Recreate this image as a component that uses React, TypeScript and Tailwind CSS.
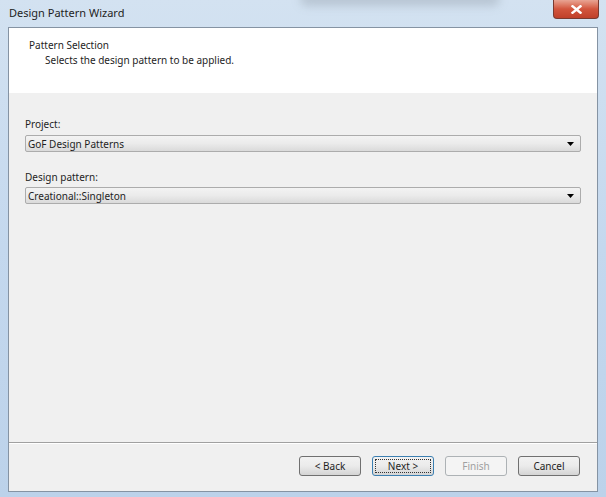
import React from 'react';

const font = { fontFamily: '"Noto Sans", "Open Sans", Arial, sans-serif' };

function Combo({ value }: { value: string }) {
  return (
    <div className="flex h-[17px] items-center justify-between rounded-[2px] border border-[#acacac] bg-gradient-to-b from-[#f3f3f3] via-[#ebebeb] to-[#dadada] pl-[2px] pr-[6px] text-[10px] leading-none text-[#1e1e1e]">
      <span>{value}</span>
      <svg width="7" height="4" viewBox="0 0 7 4">
        <path d="M0 0h7L3.5 4z" fill="#000" />
      </svg>
    </div>
  );
}

function WizButton({
  label,
  focused,
  disabled,
}: {
  label: string;
  focused?: boolean;
  disabled?: boolean;
}) {
  if (disabled) {
    return (
      <div className="flex h-[20px] w-[62px] items-center justify-center rounded-[3px] border border-[#adb2b5] bg-[#f4f4f4] text-[10px] text-[#a0a0a0]">
        {label}
      </div>
    );
  }
  return (
    <div
      className={
        'flex h-[20px] w-[62px] items-center justify-center rounded-[3px] border bg-gradient-to-b from-[#f2f2f2] via-[#ebebeb] to-[#d4d4d4] p-[2px] text-[10px] text-[#1e1e1e] ' +
        (focused ? 'border-[#3c7fb1]' : 'border-[#707070]')
      }
    >
      <div
        className={
          'flex h-full w-full items-center justify-center ' +
          (focused ? 'border border-dotted border-[#333]' : '')
        }
      >
        {label}
      </div>
    </div>
  );
}

export default function App() {
  return (
    <div
      style={font}
      className="relative flex h-[497px] w-[606px] flex-col overflow-hidden bg-gradient-to-b from-[#d3e2f1] via-[#c4d8ee] to-[#bcd2ea]"
    >
      {/* blurred glass behind title bar */}
      <div className="pointer-events-none absolute left-[300px] top-[-8px] h-[14px] w-[200px] rounded-full bg-[#8f9aa6] opacity-40 blur-[5px]" />

      {/* title bar */}
      <div className="relative flex h-[27px] shrink-0 items-center pl-[9px] text-[11px] text-[#1e1e1e]">
        Design Pattern Wizard
      </div>
      <div className="absolute right-[7px] top-0 flex h-[19px] w-[46px] items-center justify-center rounded-b-[4px] border border-t-0 border-[#7a3a30] bg-gradient-to-b from-[#e8a493] via-[#d2553d] to-[#c0402a]">
        <svg width="11" height="9" viewBox="0 0 11 9">
          <path d="M1.5 1.2l8 6.6M9.5 1.2l-8 6.6" stroke="#fff" strokeWidth="2.4" strokeLinecap="square" />
        </svg>
      </div>

      {/* client area */}
      <div className="mx-[8px] mb-[5px] flex flex-1 flex-col border border-[#8593a3]">
        <div className="h-[65px] shrink-0 bg-white pl-[20px] pt-[10px] text-[10px] leading-[15px] text-[#1e1e1e]">
          <div>Pattern Selection</div>
          <div className="pl-[16px]">Selects the design pattern to be applied.</div>
        </div>

        <div className="flex-1 bg-[#f0f0f0] px-[16px] pt-[25px] text-[10px] text-[#1e1e1e]">
          <div className="leading-[13px]">Project:</div>
          <div className="mt-[4px]">
            <Combo value="GoF Design Patterns" />
          </div>
          <div className="mt-[19px] leading-[13px]">Design pattern:</div>
          <div className="mt-[3px]">
            <Combo value="Creational::Singleton" />
          </div>
        </div>

        <div className="flex h-[49px] shrink-0 justify-end gap-[11px] border-t border-[#a0a0a0] bg-[#f0f0f0] pr-[17px] pt-[13px] shadow-[inset_0_1px_0_#fff]">
          <WizButton label="< Back" />
          <WizButton label="Next >" focused />
          <WizButton label="Finish" disabled />
          <WizButton label="Cancel" />
        </div>
      </div>
    </div>
  );
}
